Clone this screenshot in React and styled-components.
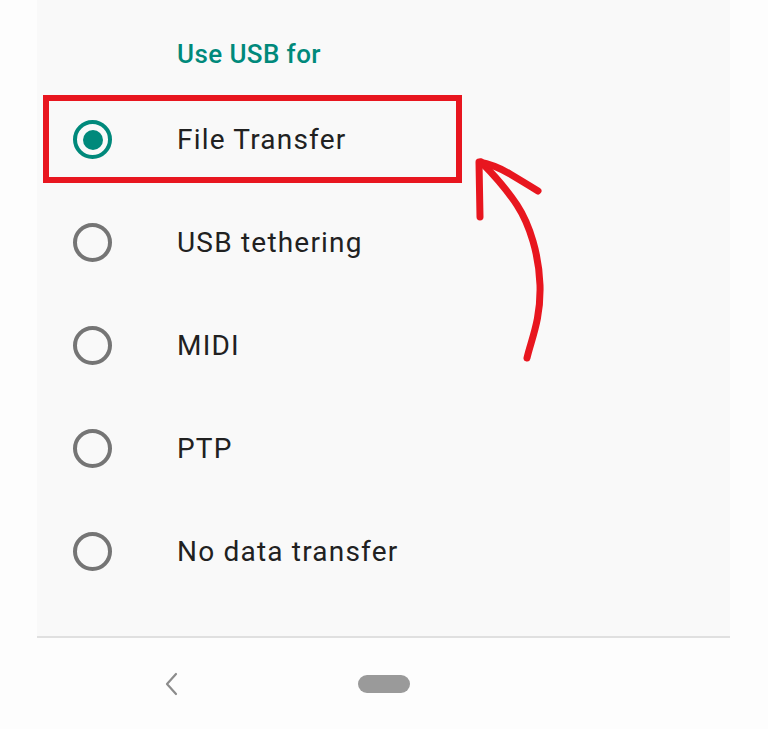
import React from 'react';
import styled, { createGlobalStyle } from 'styled-components';

const GlobalStyle = createGlobalStyle`
  html, body {
    margin: 0;
    padding: 0;
    background: #fdfdfd;
    font-family: Roboto, "Noto Sans", "Liberation Sans", sans-serif;
  }
`

const Screen = styled.div`
  position: relative;
  width: 768px;
  height: 729px;
  overflow: hidden;
  background: #fdfdfd;
`

const Sheet = styled.div`
  margin-left: 37px;
  width: 693px;
  height: 636px;
  background: #f9f9f9;
  border-bottom: 2px solid #e0e0e0;
  display: flex;
  flex-direction: column;
`

const Title = styled.div`
  height: 68px;
  padding: 20px 0 0 140px;
  display: flex;
  align-items: center;
  color: #00897b;
  font-size: 26px;
  font-weight: 500;
  letter-spacing: 0.4px;
`

const Option = styled.div`
  height: 103px;
  display: flex;
  align-items: center;
`

const Radio = styled.span`
  box-sizing: border-box;
  width: 39px;
  height: 39px;
  margin-left: 36px;
  border-radius: 50%;
  border: 4px solid ${props => (props.checked ? '#00897b' : '#757575')};
  display: flex;
  align-items: center;
  justify-content: center;

  &::after {
    content: '';
    width: 20px;
    height: 20px;
    border-radius: 50%;
    background: #00897b;
    display: ${props => (props.checked ? 'block' : 'none')};
  }
`

const Label = styled.span`
  margin-left: 65px;
  font-size: 28px;
  letter-spacing: 1.2px;
  color: #212121;
`

const NavBar = styled.div`
  height: 91px;
  display: flex;
  align-items: center;
  padding-left: 163px;
`

const Back = styled.svg`
  width: 18px;
  height: 24px;
`

const Home = styled.div`
  margin-left: 177px;
  width: 52px;
  height: 18px;
  border-radius: 9px;
  background: #9a9a9a;
`

const Markup = styled.svg`
  position: absolute;
  left: 0;
  top: 0;
  pointer-events: none;
`

const options = ['File Transfer', 'USB tethering', 'MIDI', 'PTP', 'No data transfer']

export default function App() {
  return (
    <Screen>
      <GlobalStyle />
      <Sheet>
        <Title>Use USB for</Title>
        {options.map((o, i) => (
          <Option key={o}>
            <Radio checked={i === 0} />
            <Label>{o}</Label>
          </Option>
        ))}
      </Sheet>
      <NavBar>
        <Back viewBox="0 0 18 24">
          <path d="M13 2 L4 12 L13 22" fill="none" stroke="#8c8c8c" strokeWidth="2.2" strokeLinecap="round" strokeLinejoin="round" />
        </Back>
        <Home />
      </NavBar>
      <Markup width="768" height="729" viewBox="0 0 768 729">
        <rect x="46" y="98" width="413" height="82" fill="none" stroke="#e8161f" strokeWidth="6" />
        <g fill="none" stroke="#e8161f" strokeWidth="7" strokeLinecap="round" strokeLinejoin="round">
          <path d="M527 358 C 531 340, 541 320, 540 285 C 539 255, 530 225, 517 205 C 507 190, 495 176, 481 162" />
          <path d="M480 217 L 479 162 C 490 164, 500 168, 510 174 C 520 180, 530 186, 538 191" />
        </g>
      </Markup>
    </Screen>
  );
}
